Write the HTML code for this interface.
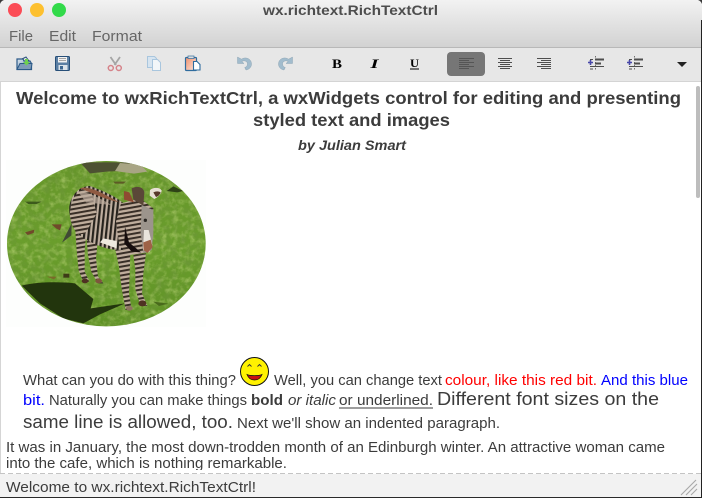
<!DOCTYPE html>
<html><head><meta charset="utf-8"><style>
html,body{margin:0;padding:0;background:#fff}
svg{display:block}
text{font-family:"Liberation Sans",sans-serif;fill:#3c3c3c;font-size:14.5px}
</style></head><body>
<svg width="702" height="498" viewBox="0 0 702 498" xmlns="http://www.w3.org/2000/svg">
<defs>
<linearGradient id="tb" x1="0" y1="0" x2="0" y2="1"><stop offset="0" stop-color="#f2f2f2"/><stop offset="1" stop-color="#d2d2d2"/></linearGradient>
<linearGradient id="blue" x1="0" y1="0" x2="1" y2="1"><stop offset="0" stop-color="#dbe6ef"/><stop offset="1" stop-color="#6f8fb0"/></linearGradient>
<linearGradient id="pasteg" x1="0" y1="0" x2="1" y2="1"><stop offset="0" stop-color="#f0906c"/><stop offset="1" stop-color="#fbe8df"/></linearGradient>
<linearGradient id="grass" x1="0" y1="0" x2="0" y2="1"><stop offset="0" stop-color="#66962a"/><stop offset=".5" stop-color="#6a9e2c"/><stop offset="1" stop-color="#5f9226"/></linearGradient>
<pattern id="st" width="13" height="13" patternUnits="userSpaceOnUse" patternTransform="rotate(6)"><rect width="13" height="13" fill="#bfae9f"/><rect width="6.500" height="13" fill="#26211d"/></pattern>
<pattern id="st2" width="13" height="13" patternUnits="userSpaceOnUse" patternTransform="rotate(80)"><rect width="13" height="13" fill="#c0ae9d"/><rect width="6" height="13" fill="#372d26"/></pattern>
<filter id="mot" x="0" y="0" width="100%" height="100%"><feTurbulence type="fractalNoise" baseFrequency="0.045" numOctaves="4" seed="4"/><feColorMatrix values="0 0 0 0 .16  0 0 0 0 .30  0 0 0 0 .05  2 0 0 0 -.8"/></filter>
<filter id="mot2" x="0" y="0" width="100%" height="100%"><feTurbulence type="fractalNoise" baseFrequency="0.06" numOctaves="3" seed="11"/><feColorMatrix values="0 0 0 0 .62  0 0 0 0 .76  0 0 0 0 .26  2 0 0 0 -.85"/></filter>
<filter id="soft" x="-5%" y="-5%" width="110%" height="110%"><feGaussianBlur stdDeviation="1"/></filter>
<clipPath id="oval"><ellipse cx="319" cy="266" rx="298" ry="248"/></clipPath>
<clipPath id="textclip"><rect x="0" y="82" width="702" height="388"/></clipPath>
</defs>

<rect width="702" height="498" fill="#fff"/>
<!-- title bar -->
<rect width="702" height="47" fill="url(#tb)"/>
<rect y="47" width="702" height="1.2" fill="#b8b8b8"/>
<path d="M0 0h4Q1 1 0 4z" fill="#3a3a3a"/>
<path d="M702 0h-4Q701 1 702 4z" fill="#3a3a3a"/>
<circle cx="15" cy="10" r="7" fill="#fb4c56"/>
<circle cx="37" cy="10" r="7" fill="#fdc02f"/>
<circle cx="59" cy="10" r="7" fill="#32da4a"/>
<text x="263" y="15" textLength="175" lengthAdjust="spacingAndGlyphs" style="font-weight:bold;font-size:14px;fill:#4d4d4d">wx.richtext.RichTextCtrl</text>
<text x="9" y="41" textLength="24" lengthAdjust="spacingAndGlyphs" style="font-size:14.5px;fill:#666">File</text>
<text x="49" y="41" textLength="27" lengthAdjust="spacingAndGlyphs" style="font-size:14.5px;fill:#666">Edit</text>
<text x="92" y="41" textLength="50" lengthAdjust="spacingAndGlyphs" style="font-size:14.5px;fill:#666">Format</text>

<!-- toolbar -->
<rect y="48" width="702" height="33" fill="#e7e7e7"/>
<rect y="81" width="702" height="1" fill="#d4d4d4"/>

<!-- open -->
<path d="M17 59h6l1 2h6l1.500 2.500V69.500H17z" fill="url(#blue)" stroke="#2c5a88" stroke-width="1.200"/>
<path d="M17 69.500l3-6h12l-1 6z" fill="#7e9ab8" stroke="#2c5a88"/>
<path d="M22 59l4-2 3 4" fill="none" stroke="#27507a"/>
<path d="M25 59h3v3h2l-3.500 3.500L23 62h2z" fill="#6fd04e"/>
<!-- save -->
<rect x="55.500" y="56.500" width="14" height="14" rx="1" fill="#5b7fa3" stroke="#274f78"/>
<rect x="58" y="57" width="9" height="5.500" fill="#f2f2f2"/>
<path d="M59 58.500h7M59 60.500h7" stroke="#8a8a8a" stroke-width=".8"/>
<rect x="58.500" y="65" width="9" height="5" fill="#dbe3ea"/>
<rect x="60" y="66" width="3" height="3.500" fill="#3c6690"/>
<!-- cut -->
<g opacity=".85">
<path d="M110.500 57l5.500 8M120 57l-5.500 8" stroke="#9a9a9a" stroke-width="1.800" fill="none"/>
<circle cx="110.800" cy="68" r="2.500" fill="none" stroke="#d3727a" stroke-width="1.500"/>
<circle cx="118.800" cy="68" r="2.500" fill="none" stroke="#d3727a" stroke-width="1.500"/>
</g>
<!-- copy -->
<path d="M147.500 56.500h7l2 2v9h-9z" fill="#d6e4f0" stroke="#a9c6de"/>
<path d="M152.500 59.500h5l3 3v8h-8z" fill="#f2f6f9" stroke="#a9c6de"/>
<!-- paste -->
<rect x="185.500" y="57.500" width="11" height="13" rx="1" fill="url(#pasteg)" stroke="#2f6c9e" stroke-width="1.200"/>
<rect x="188" y="56" width="6" height="2.500" fill="#ddd" stroke="#2f6c9e" stroke-width=".7"/>
<path d="M193.500 61.500h3.500l3 3v5.500h-6.500z" fill="#fff" stroke="#2f6c9e" stroke-width="1.100"/>
<!-- undo -->
<path d="M237.500 57v6.500h6.500l-2.200-2.200c2.800-1.300 5.700.2 5.700 2.700 0 1.800-1.300 3-2.800 3.500l1.300 2.500c3.500-.6 5.500-3.200 5.500-6 0-5.200-6-7.700-10-4.800z" fill="#a2bccd" stroke="#8fa6b5" stroke-width=".5"/>
<!-- redo -->
<path d="M292.500 57v6.500H286l2.200-2.200c-2.800-1.300-5.700.2-5.700 2.700 0 1.800 1.300 3 2.800 3.500l-1.300 2.500c-3.500-.6-5.500-3.200-5.500-6 0-5.200 6-7.700 10-4.800z" fill="#a2bccd" stroke="#8fa6b5" stroke-width=".5"/>
<!-- B I U -->
<text x="332" y="68" style="font-family:'Liberation Serif',serif;font-weight:bold;font-size:13px;fill:#000" textLength="10" lengthAdjust="spacingAndGlyphs">B</text>
<text x="370.500" y="68" style="font-family:'Liberation Serif',serif;font-weight:bold;font-style:italic;font-size:13px;fill:#000" textLength="8" lengthAdjust="spacingAndGlyphs">I</text>
<text x="410" y="67" style="font-family:'Liberation Serif',serif;font-weight:bold;font-size:12px;fill:#000" textLength="9" lengthAdjust="spacingAndGlyphs">U</text>
<rect x="410" y="68.500" width="9" height="1" fill="#000"/>
<!-- align -->
<rect x="447" y="52" width="38" height="24" rx="4" fill="#767676"/>
<path d="M459 58.500h15M459 60.500h10M459 62.500h15M459 64.500h10M459 66.500h15M459 68.500h10" stroke="#555" stroke-width="1.100"/>
<path d="M498 58.500h14M500 60.500h10M498 62.500h14M500 64.500h10M498 66.500h14M500 68.500h10" stroke="#4e4e4e" stroke-width="1"/>
<path d="M537 58.500h14M541 60.500h10M537 62.500h14M541 64.500h10M537 66.500h14M541 68.500h10" stroke="#4e4e4e" stroke-width="1"/>
<!-- indent -->
<g>
<path d="M595.500 56v15" stroke="#555" stroke-width=".8" stroke-dasharray="1.500 1.500"/>
<path d="M590 59.500h3" stroke="#4e4e4e"/>
<rect x="595" y="58.500" width="9" height="2" fill="#4e4e4e"/>
<rect x="595" y="62.500" width="6" height="2" fill="#4e4e4e"/>
<path d="M590 66.500h14M590 69h3" stroke="#4e4e4e"/>
<path d="M588 62.500h5M590.500 60v5" stroke="#4747a8" stroke-width="1.600"/>
</g>
<g transform="translate(39,0)">
<path d="M595.500 56v15" stroke="#555" stroke-width=".8" stroke-dasharray="1.500 1.500"/>
<path d="M590 59.500h3" stroke="#4e4e4e"/>
<rect x="595" y="58.500" width="9" height="2" fill="#4e4e4e"/>
<rect x="595" y="62.500" width="6" height="2" fill="#4e4e4e"/>
<path d="M590 66.500h14M590 69h3" stroke="#4e4e4e"/>
<path d="M588 62.500h5M590.500 60v5" stroke="#4747a8" stroke-width="1.600"/>
</g>
<path d="M677 62h10l-5 5z" fill="#222"/>

<!-- content -->
<rect x="0" y="82" width="1" height="392" fill="#d5d5d5"/>
<text x="16" y="104" textLength="665" lengthAdjust="spacingAndGlyphs" style="font-weight:bold;font-size:17.500px">Welcome to wxRichTextCtrl, a wxWidgets control for editing and presenting</text>
<text x="253" y="126" textLength="197" lengthAdjust="spacingAndGlyphs" style="font-weight:bold;font-size:17.500px">styled text and images</text>
<text x="298" y="150" textLength="108" lengthAdjust="spacingAndGlyphs" style="font-weight:bold;font-style:italic;font-size:14px">by Julian Smart</text>

<!-- zebra image -->
<rect x="6" y="160" width="200" height="167" fill="#fdfefd"/>
<g transform="translate(0,155) scale(.33333)">
<g clip-path="url(#oval)">
<rect x="20" y="15" width="600" height="505" fill="url(#grass)"/>
<rect x="20" y="15" width="600" height="505" filter="url(#mot2)" opacity=".55"/>
<rect x="20" y="15" width="600" height="505" filter="url(#mot)" opacity=".6"/>
<g filter="url(#soft)">
<path d="M240 22l30 33 50-5 40-2 35 6 40-8-15-24H240z" fill="#4e5130"/>
<path d="M345 48l15-24 60 4 22 22-40 6z" fill="#a8a584"/>
<path d="M500 108l20-14 30 14-18 4z" fill="#2f4219"/>
<path d="M75 140h50l-15 7H85z" fill="#3d5a1e"/>
<path d="M340 80h38l-8 6h-25z" fill="#5d5a26"/>
<path d="M75 232l28-8-2 10-18 6z" fill="#6f4a2a"/>
<path d="M155 208h30l-5 18-12-6z" fill="#6f4a2a"/>
<!-- shadow -->
<path d="M65 392C110 380 180 380 225 385L280 432 272 460 375 445 300 478 250 505 190 490 120 445z" fill="#233608"/>
<path d="M460 440l45 6-28 7z" fill="#4a6a1c"/>
<path d="M190 356h18v12h-18z" fill="#3e3a17"/>
<path d="M140 365h30l-8 8z" fill="#7a6a2a"/>
<!-- legs -->
<path d="M226 225l34 0-6 60 0 65 14 30h-18l-14-34-6-60z" fill="url(#st2)"/>
<path d="M260 255l34-5-6 60 6 55 16 20h-16l-20-35-10-50z" fill="url(#st2)"/>
<path d="M345 280l46 10-2 65-2 60 8 50h-18l-12-65-8-65z" fill="url(#st2)"/>
<path d="M400 300l38-5-8 60-4 60 16 38h-20l-16-50 0-60z" fill="url(#st2)"/>
<path d="M215 205l-29 58 28-22z" fill="#3f4a36"/>
<!-- body -->
<path d="M208 155C213 118 240 93 270 93 310 108 345 123 368 143L398 240 402 287 345 284C310 282 270 262 240 242 220 226 206 190 208 155z" fill="url(#st)"/>
<path d="M210 175C213 123 240 96 270 98L290 175 255 237 235 237C218 220 210 200 210 175z" fill="url(#st2)"/>
<path d="M240 100C265 90 310 115 358 142 320 135 280 115 240 100z" fill="#8f5a42"/>
<path d="M238 115C260 106 295 128 335 150L258 142z" fill="#bcab9c" opacity=".7"/>
<path d="M300 262l50 18 0-22-40-8z" fill="#efe9df"/>
<!-- neck/head -->
<path d="M363 145L420 130 460 160 458 240 450 290 420 297 385 300 358 272 348 200z" fill="url(#st2)"/>
<path d="M395 100c15-8 35-6 38 12l-3 40-30-18z" fill="#5a4638"/>
<path d="M425 150l35 15 0 70-5 50-25 8-8-60z" fill="#9c948c"/>
<path d="M432 225l14 0 11 45-10 22-18-8z" fill="#e9e4dc"/>
<path d="M430 262l22-8 6 22-15 18-12-8z" fill="#9e6246"/>
<path d="M372 108l16 4 14 30-30-8z" fill="#8f4c30"/>
<path d="M450 105c8-8 30-10 35 2-2 12-12 20-22 25l-14-10z" fill="#e8e0d5"/>
<path d="M460 112c8-4 16-4 22 0-3 8-8 12-14 14z" fill="#59392b"/>
<path d="M375 215l12 47 36 30-28-2-22-25z" fill="#14110f"/>
<circle cx="436" cy="196" r="5" fill="#2a2623"/>
<ellipse cx="255" cy="378" rx="10" ry="7" fill="#4f3222"/><ellipse cx="296" cy="378" rx="10" ry="7" fill="#7d563c"/><ellipse cx="388" cy="460" rx="10" ry="7" fill="#8d7360"/><ellipse cx="427" cy="445" rx="12" ry="9" fill="#4f3222"/>
</g>
</g>
</g>

<!-- smiley -->
<circle cx="254.500" cy="371.500" r="14" fill="#fff200" stroke="#111" stroke-width="1"/>
<path d="M247.500 366.500l2-2 2 2M257.500 366.500l2-2 2 2" fill="none" stroke="#333" stroke-width=".9"/>
<path d="M247 374.500c3 1.500 12 1.500 15 0-1.500 4-4 5.500-7.500 5.500s-6-1.500-7.500-5.500z" fill="#c81010" stroke="#111" stroke-width=".7"/>

<g clip-path="url(#textclip)">
<text x="23" y="385" textLength="213" lengthAdjust="spacingAndGlyphs">What can you do with this thing?</text>
<text x="274" y="385" textLength="168" lengthAdjust="spacingAndGlyphs">Well, you can change text</text>
<text x="445" y="385" textLength="152" lengthAdjust="spacingAndGlyphs" style="fill:#ff0000">colour, like this red bit.</text>
<text x="601" y="385" textLength="87" lengthAdjust="spacingAndGlyphs" style="fill:#0000ff">And this blue</text>
<text x="23" y="405" textLength="22" lengthAdjust="spacingAndGlyphs" style="fill:#0000ff">bit.</text>
<text x="49" y="405" textLength="198" lengthAdjust="spacingAndGlyphs">Naturally you can make things</text>
<text x="251" y="405" textLength="32" lengthAdjust="spacingAndGlyphs" style="font-weight:bold">bold</text>
<text x="288" y="405" textLength="48" lengthAdjust="spacingAndGlyphs" style="font-style:italic">or italic</text>
<text x="339" y="405" textLength="94" lengthAdjust="spacingAndGlyphs">or underlined.</text>
<rect x="339" y="407.500" width="94" height="1" fill="#3c3c3c"/>
<text x="437" y="405" textLength="222" lengthAdjust="spacingAndGlyphs" style="font-size:18.500px">Different font sizes on the</text>
<text x="23" y="428" textLength="210" lengthAdjust="spacingAndGlyphs" style="font-size:18.500px">same line is allowed, too.</text>
<text x="237" y="428" textLength="263" lengthAdjust="spacingAndGlyphs">Next we'll show an indented paragraph.</text>
<text x="6" y="452" textLength="659" lengthAdjust="spacingAndGlyphs">It was in January, the most down-trodden month of an Edinburgh winter. An attractive woman came</text>
<text x="6" y="468" textLength="281" lengthAdjust="spacingAndGlyphs">into the cafe, which is nothing remarkable.</text>
</g>

<!-- scrollbar -->
<rect x="696" y="86" width="4" height="112" rx="2" fill="#bdbdbd"/>

<!-- status bar -->
<rect x="0" y="474" width="702" height="23" fill="#f2f2f2"/>
<path d="M0 473.500H702" stroke="#c4c4c4" stroke-dasharray="5 3"/>
<text x="6" y="492" textLength="250" lengthAdjust="spacingAndGlyphs">Welcome to wx.richtext.RichTextCtrl!</text>
<path d="M681 495l15-15M686 495l11-11M691 495l6-6" stroke="#a8a8a8" stroke-width="1.100"/>
<rect y="497" width="702" height="1" fill="#2a2a2a"/>
<rect x="701" y="20" width="1" height="478" fill="#222"/>
</svg>
</body></html>
